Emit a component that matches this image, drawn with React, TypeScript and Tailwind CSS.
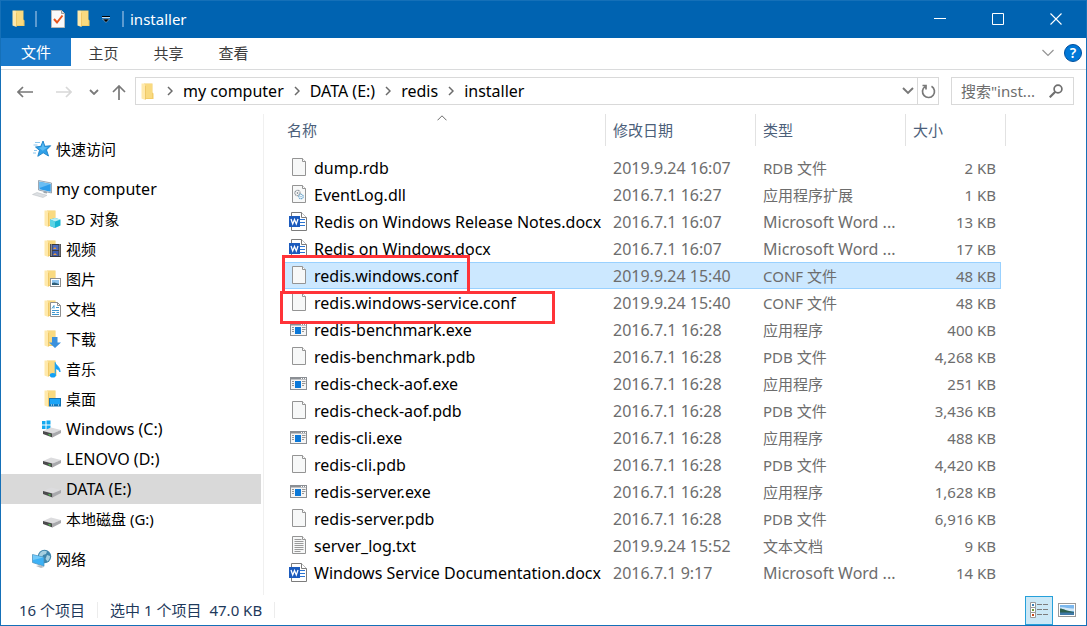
import type { ReactNode } from 'react';

type FileKind = 'blank' | 'dll' | 'word' | 'exe' | 'text';

interface FileRow {
  name: string;
  date: string;
  type: string;
  size: string;
  kind: FileKind;
  selected?: boolean;
  mark?: string;
}

const files: FileRow[] = [
  { name: 'dump.rdb', date: '2019.9.24 16:07', type: 'RDB 文件', size: '2 KB', kind: 'blank' },
  { name: 'EventLog.dll', date: '2016.7.1 16:27', type: '应用程序扩展', size: '1 KB', kind: 'dll' },
  { name: 'Redis on Windows Release Notes.docx', date: '2016.7.1 16:07', type: 'Microsoft Word ...', size: '13 KB', kind: 'word' },
  { name: 'Redis on Windows.docx', date: '2016.7.1 16:07', type: 'Microsoft Word ...', size: '17 KB', kind: 'word' },
  { name: 'redis.windows.conf', date: '2019.9.24 15:40', type: 'CONF 文件', size: '48 KB', kind: 'blank', selected: true, mark: '-left-0.5 -top-2 h-[39px] w-[188px]' },
  { name: 'redis.windows-service.conf', date: '2019.9.24 15:40', type: 'CONF 文件', size: '48 KB', kind: 'blank', mark: '-left-1 top-px h-[33px] w-[275px]' },
  { name: 'redis-benchmark.exe', date: '2016.7.1 16:28', type: '应用程序', size: '400 KB', kind: 'exe' },
  { name: 'redis-benchmark.pdb', date: '2016.7.1 16:28', type: 'PDB 文件', size: '4,268 KB', kind: 'blank' },
  { name: 'redis-check-aof.exe', date: '2016.7.1 16:28', type: '应用程序', size: '251 KB', kind: 'exe' },
  { name: 'redis-check-aof.pdb', date: '2016.7.1 16:28', type: 'PDB 文件', size: '3,436 KB', kind: 'blank' },
  { name: 'redis-cli.exe', date: '2016.7.1 16:28', type: '应用程序', size: '488 KB', kind: 'exe' },
  { name: 'redis-cli.pdb', date: '2016.7.1 16:28', type: 'PDB 文件', size: '4,420 KB', kind: 'blank' },
  { name: 'redis-server.exe', date: '2016.7.1 16:28', type: '应用程序', size: '1,628 KB', kind: 'exe' },
  { name: 'redis-server.pdb', date: '2016.7.1 16:28', type: 'PDB 文件', size: '6,916 KB', kind: 'blank' },
  { name: 'server_log.txt', date: '2019.9.24 15:52', type: '文本文档', size: '9 KB', kind: 'text' },
  { name: 'Windows Service Documentation.docx', date: '2016.7.1 9:17', type: 'Microsoft Word ...', size: '14 KB', kind: 'word' },
];

/** Latin-only labels are set one step larger than labels with Chinese text. */
function labelSize(text: string) {
  return /^[ -~]+$/.test(text) ? 'text-[16px] leading-5' : 'text-[15px] leading-5';
}

function FolderShape() {
  return (
    <>
      <path d="M3 0.5h8.5v9l1 1V16H3z" fill="#f3cd69" />
      <path d="M3.5 1h7.5v14H3.5z" fill="#f9da80" />
      <path d="M0.5 0.5h2.5l1.5 1.8V17L0.5 15.5z" fill="#ffe9ab" />
      <path d="M4.5 2.5V16.5" stroke="#e9bd55" strokeWidth="0.7" />
    </>
  );
}

function FolderIcon() {
  return (
    <svg width="13" height="17" viewBox="0 0 13 17" aria-hidden="true">
      <FolderShape />
    </svg>
  );
}

function PageShape() {
  return (
    <>
      <path d="M2.5 0.5h10l3 3v14h-13z" fill="#f7f8f8" stroke="#949494" />
      <path d="M12.5 0.5v3h3" fill="#fff" stroke="#949494" />
    </>
  );
}

function FileIcon({ kind }: { kind: FileKind }) {
  return (
    <svg width="18" height="20" viewBox="0 0 18 20" className="shrink-0" aria-hidden="true">
      {kind === 'word' && (
        <>
          <path d="M2.500 0.500h10l5 5v13h-15z" fill="#fff" stroke="#7c7c7c" />
          <path d="M12.500 0.500v5h5" fill="#fff" stroke="#7c7c7c" />
          <path d="M11 7.500h5M11 10.500h5M11 13.500h5" stroke="#2b74d2" />
          <rect x="0" y="4" width="11" height="11" fill="#1c5bbd" />
          <path d="M2 7l1.700 5 1.800-4.500 1.800 4.500 1.700-5" fill="none" stroke="#fff" strokeWidth="1.300" />
        </>
      )}
      {kind === 'exe' && (
        <>
          <rect x="1.500" y="3.500" width="16" height="12" fill="#f5f5f5" stroke="#8b8f94" />
          <path d="M1 4.500h17" stroke="#8b8f94" strokeWidth="2" />
          <path d="M12 4.500h1M14 4.500h1M16 4.500h1" stroke="#fff" />
          <rect x="6" y="7" width="6" height="7" fill="#0b78d8" />
          <path d="M3 7.500h2M3 9.500h2M3 11.500h2M13 7.500h3.500M13 9.500h3.500M13 11.500h2" stroke="#8a8a8a" strokeWidth="0.900" />
        </>
      )}
      {(kind === 'blank' || kind === 'dll' || kind === 'text') && (
        <g transform="translate(1 0)">
          <PageShape />
          {kind === 'text' && (
            <path d="M4.500 3.500h7M4.500 5.500h9M4.500 7.500h9M4.500 9.500h9M4.500 11.500h9M4.500 13.500h9M4.500 15.500h6" stroke="#9a9a9a" />
          )}
          {kind === 'dll' && (
            <>
              <circle cx="7.500" cy="8" r="2.600" fill="#fff" stroke="#8d949a" strokeWidth="1.300" strokeDasharray="1.300 0.500" />
              <circle cx="7.500" cy="8" r="0.900" fill="#8d949a" />
              <circle cx="11" cy="11.500" r="2.200" fill="#fff" stroke="#6fa8cf" strokeWidth="1.300" strokeDasharray="1.300 0.500" />
              <circle cx="11" cy="11.500" r="0.700" fill="#6fa8cf" />
            </>
          )}
        </g>
      )}
    </svg>
  );
}

type NavKind = 'star' | 'pc' | '3d' | 'video' | 'image' | 'doc' | 'download' | 'music' | 'desktop' | 'windrive' | 'drive' | 'network';

function DriveShape() {
  return (
    <>
      <path d="M1 12l8-3.500L19 11 10.500 14.500z" fill="#dcdcde" />
      <path d="M1 12l9.500 2.500V18.500L1 15z" fill="#4b4b4d" />
      <path d="M10.500 14.500L19 11v3L10.500 18.500z" fill="#a9a9ad" />
      <path d="M6.500 15.500l2 0.600" stroke="#4ed04e" strokeWidth="1.300" />
    </>
  );
}

const badges: Partial<Record<NavKind, ReactNode>> = {
  '3d': (
    <>
      <path d="M12 8l5.500 1.500v6L12 18 7 16V9.500z" fill="#19b5d2" />
      <path d="M7 9.500l5-1.500 5.500 1.500L12 11.500z" fill="#b8eef5" />
      <path d="M7 9.500l5 2V18l-5-2z" fill="#5bd3e4" />
    </>
  ),
  video: (
    <>
      <rect x="7" y="4" width="11" height="13" fill="#3b3b3d" />
      <rect x="9.500" y="5" width="6" height="5" fill="#4d6dc0" />
      <rect x="9.500" y="11" width="6" height="5" fill="#3c5cb0" />
      <path d="M10 9l2-2 1.500 2zM10 15l2-2 2 2z" fill="#e89a3c" />
      <path d="M8.300 4.500v12M16.800 4.500v12" stroke="#fff" strokeDasharray="1 1" />
    </>
  ),
  image: (
    <>
      <rect x="7.500" y="8.500" width="10" height="8" fill="#fff" stroke="#8f8f8f" />
      <rect x="9" y="10" width="7" height="5" fill="#8fc4ee" />
      <path d="M9 13l2.500-0.500L16 14v1H9z" fill="#2e5d77" />
    </>
  ),
  doc: (
    <>
      <path d="M7.500 2.500h7l3 3v11h-10z" fill="#fff" stroke="#8f8f8f" />
      <path d="M14.500 2.500v3h3" fill="none" stroke="#8f8f8f" />
      <path d="M9 8.500l2-3v3M13 7.500h3M9 10.500h7M9 12.500h3M13.500 12.500h2.500M9 14.500h7" fill="none" stroke="#3f97cf" />
    </>
  ),
  download: <path d="M9 7h5.500v5.500h3.500l-6 5.500-6-5.500h3z" fill="#3b91dd" />,
  music: (
    <>
      <ellipse cx="9.800" cy="15.300" rx="3" ry="2.300" fill="#12a0f5" />
      <path d="M12.200 15.500V2.500c0.500 3 5 4 4.800 9.500c-0.800-2-2-2.800-4-3.200" fill="#12a0f5" stroke="#12a0f5" strokeWidth="0.900" />
    </>
  ),
  desktop: (
    <>
      <rect x="6.500" y="8.500" width="11" height="7.500" fill="#1ba4f7" stroke="#1474b4" />
      <path d="M7 15h10" stroke="#0d5c93" />
      <path d="M8 15h1M10 15h1M15 15h1" stroke="#fff" />
    </>
  ),
};

function NavIcon({ kind }: { kind: NavKind }) {
  return (
    <svg width="20" height="20" viewBox="0 0 20 20" className="shrink-0" aria-hidden="true">
      {kind === 'star' && (
        <>
          <path d="M11 2l1.900 5.300 5.800-0.600-4.200 4.200 2 6.100-5.300-3.200-5.400 3.500 1.700-6L3.500 8l5.400-0.700z" fill="#2fa0e8" stroke="#1b80c6" strokeWidth="0.900" />
          <path d="M11 3.500l1.200 4.600 3.500 0.200-5 3.500-4-3 2.800-0.500z" fill="#5cbcf3" />
          <path d="M3 3.500h5M1.500 6h4M2 11.500h3M1 14h3" stroke="#8cc6ee" />
        </>
      )}
      {kind === 'pc' && (
        <>
          <path d="M6.500 1.500l13 2.500v10l-13-3z" fill="#dce4ea" stroke="#8796a3" strokeWidth="0.800" />
          <path d="M7.500 2.800l11.200 2.200v7.800l-11.200-2.600z" fill="#2d9cea" />
          <path d="M7.500 2.800l11.200 2.200-11.200 4z" fill="#69bdf3" />
          <path d="M11.500 12.300l3.500 0.800v1.400l-3.500-0.500z" fill="#9ba5ad" />
          <path d="M0.500 15.500l4.500-2 10 2.800-4 2.200z" fill="#dcdfe2" stroke="#b6bcc1" strokeWidth="0.500" />
        </>
      )}
      {kind === 'network' && (
        <>
          <circle cx="12.500" cy="7.500" r="6.700" fill="#3f86ac" />
          <path d="M9 3c2-1.500 4-1.500 6-0.500l-1 2.500-3 1-1 3-3 1C6.500 6 7.500 4.500 9 3zM15 6l3 1c0 3-1 4-2.500 5.500L13.500 10z" fill="#a5cfe0" />
          <path d="M0.500 5.500l11.500 2.800v9L0.500 13.500z" fill="#3db1f5" stroke="#4b8fb9" strokeWidth="0.700" />
          <path d="M1 6l10.500 2.500L1 11z" fill="#74caf9" />
          <path d="M4 17l4-1 4 2-3 1z" fill="#b5bdc3" />
        </>
      )}
      {kind === 'drive' && <DriveShape />}
      {kind === 'windrive' && (
        <>
          <path d="M0 2h3.500v3.500H0zM4.500 1.500H8.500v4H4.500zM0 6.500h3.500V10H0zM4.500 6.500h4v4h-4z" fill="#14aaf0" />
          <DriveShape />
        </>
      )}
      {badges[kind] && (
        <g transform="translate(1 1)">
          <g transform="translate(1 0)">
            <FolderShape />
          </g>
          {badges[kind]}
        </g>
      )}
    </svg>
  );
}

interface NavItem {
  label: string;
  kind: NavKind;
  current?: boolean;
}

const places: NavItem[] = [
  { label: '3D 对象', kind: '3d' },
  { label: '视频', kind: 'video' },
  { label: '图片', kind: 'image' },
  { label: '文档', kind: 'doc' },
  { label: '下载', kind: 'download' },
  { label: '音乐', kind: 'music' },
  { label: '桌面', kind: 'desktop' },
  { label: 'Windows (C:)', kind: 'windrive' },
  { label: 'LENOVO (D:)', kind: 'drive' },
  { label: 'DATA (E:)', kind: 'drive', current: true },
  { label: '本地磁盘 (G:)', kind: 'drive' },
];

function NavLink({ item, nested = false }: { item: NavItem; nested?: boolean }) {
  return (
    <a
      href="#"
      aria-current={item.current ? 'page' : undefined}
      className={`flex h-[30px] items-center gap-1 whitespace-nowrap text-black ${labelSize(item.label)} ${nested ? 'pl-[41px]' : 'pl-[31px]'} ${item.current ? 'bg-[#d9d9d9]' : ''}`}
    >
      <NavIcon kind={item.kind} />
      {item.label}
    </a>
  );
}

function Crumb({ label }: { label: string }) {
  return (
    <>
      <span className="flex w-[26px] justify-center">
        <svg width="6" height="10" viewBox="0 0 6 10" fill="none" stroke="#6b6b6b" strokeWidth="1.500" aria-hidden="true">
          <path d="M1 1l4 4-4 4" />
        </svg>
      </span>
      <button type="button" className={`whitespace-nowrap ${labelSize(label)}`}>{label}</button>
    </>
  );
}

function TitleBar() {
  return (
    <header className="flex h-[37px] items-center bg-[#0063b1] pb-0.5 text-white">
      <div className="flex items-center pl-[11px]">
        <FolderIcon />
        <span className="ml-2.5 h-4 w-0.5 border border-[#5d9bd0] bg-[#003f78]" />
        <button type="button" aria-label="属性" className="ml-3.5">
          <svg width="14" height="18" viewBox="0 0 14 18" aria-hidden="true">
            <path d="M0.500 0.500h10l3 3v14h-13z" fill="#fafafa" stroke="#b8b8b8" />
            <path d="M10.500 0.500v3h3" fill="#ddd" stroke="#9a9a9a" />
            <path d="M3 9l3 3.500 5.500-7" fill="none" stroke="#e8541c" strokeWidth="2" />
          </svg>
        </button>
        <button type="button" aria-label="新建文件夹" className="ml-3">
          <FolderIcon />
        </button>
        <button type="button" aria-label="自定义快速访问工具栏" className="ml-3">
          <svg width="8" height="8" viewBox="0 0 8 8" aria-hidden="true">
            <path d="M0 1.500h8" stroke="#000" />
            <path d="M0 2.500h8" stroke="#c3dcf0" />
            <path d="M0.500 4h7L4 7.500z" fill="#000" stroke="#c3dcf0" strokeWidth="0.500" />
          </svg>
        </button>
        <span className="ml-3 h-4 w-0.5 border border-[#5d9bd0] bg-[#003f78]" />
      </div>
      <h1 className="ml-1.5 text-[15px]">installer</h1>
      <div className="ml-auto flex h-full pr-px">
        <button type="button" aria-label="最小化" className="flex w-[58px] items-center justify-center">
          <svg width="12" height="12" viewBox="0 0 12 12" stroke="#fff" aria-hidden="true"><path d="M0 5.500h12" /></svg>
        </button>
        <button type="button" aria-label="最大化" className="flex w-[58px] items-center justify-center">
          <svg width="12" height="12" viewBox="0 0 12 12" stroke="#fff" fill="none" aria-hidden="true"><path d="M0.500 0.500h11v11h-11z" /></svg>
        </button>
        <button type="button" aria-label="关闭" className="flex w-[58px] items-center justify-center">
          <svg width="12" height="12" viewBox="0 0 12 12" stroke="#fff" strokeWidth="1.100" aria-hidden="true"><path d="M0.500 0.500l11 11M11.500 0.500l-11 11" /></svg>
        </button>
      </div>
    </header>
  );
}

function Ribbon() {
  return (
    <nav aria-label="功能区" className="flex h-8 items-start border-b border-[#dadbdc]">
      <button type="button" className="h-7 w-[70px] bg-[#1979ca] text-white">文件</button>
      {['主页', '共享', '查看'].map((tab) => (
        <button key={tab} type="button" className="h-[30px] w-[65px] text-[#3c3c3c]">{tab}</button>
      ))}
      <div className="ml-auto flex h-[30px] items-center gap-2.5 pr-1">
        <button type="button" aria-label="展开功能区">
          <svg width="12" height="8" viewBox="0 0 12 8" fill="none" stroke="#949494" strokeWidth="1.200" aria-hidden="true"><path d="M0.500 1L6 6.500 11.500 1" /></svg>
        </button>
        <button type="button" aria-label="帮助" className="flex h-[18px] w-[18px] items-center justify-center rounded-full border border-[#004f9e] bg-[#0078d7] text-[14px] font-semibold leading-4 text-white">?</button>
      </div>
    </nav>
  );
}

function Toolbar() {
  return (
    <div className="flex h-11 items-center pb-0.5 pr-3">
      <div className="flex w-[134px] items-center pl-4 pt-0.5">
        <button type="button" aria-label="后退">
          <svg width="16" height="12" viewBox="0 0 16 12" fill="none" stroke="#787878" strokeWidth="1.700" aria-hidden="true"><path d="M6 1L1 6l5 5M1 6h15" /></svg>
        </button>
        <button type="button" aria-label="前进" className="ml-[23px]">
          <svg width="16" height="12" viewBox="0 0 16 12" fill="none" stroke="#d8d8d8" strokeWidth="1.700" aria-hidden="true"><path d="M10 1l5 5-5 5M15 6H0" /></svg>
        </button>
        <button type="button" aria-label="最近浏览的位置" className="ml-[17px]">
          <svg width="10" height="6" viewBox="0 0 10 6" fill="none" stroke="#7a7a7a" strokeWidth="1.800" aria-hidden="true"><path d="M1 1l4 4 4-4" /></svg>
        </button>
        <button type="button" aria-label="向上" className="ml-[13px]">
          <svg width="14" height="15" viewBox="0 0 14 15" fill="none" stroke="#787878" strokeWidth="1.700" aria-hidden="true"><path d="M1 7l6-6 6 6M7 1v14" /></svg>
        </button>
      </div>
      <div className="flex h-7 flex-1 items-center border border-[#d9d9d9] pl-[5px] text-black">
        <span className="mr-[3px]"><FolderIcon /></span>
        <Crumb label="my computer" />
        <Crumb label="DATA (E:)" />
        <Crumb label="redis" />
        <Crumb label="installer" />
        <button type="button" aria-label="历史记录" className="ml-auto flex h-full w-[18px] items-center justify-center">
          <svg width="12" height="8" viewBox="0 0 12 8" fill="none" stroke="#787878" strokeWidth="1.900" aria-hidden="true"><path d="M1 1l5 5 5-5" /></svg>
        </button>
        <button type="button" aria-label="刷新" className="flex h-full w-[21px] items-center justify-center border-l border-[#d9d9d9]">
          <svg width="15" height="15" viewBox="0 0 15 15" fill="none" stroke="#787878" strokeWidth="1.700" aria-hidden="true">
            <path d="M10.500 2.300a6 6 0 1 1-6.500 0.300M1.500 1.500H5v4" />
          </svg>
        </button>
      </div>
      <div className="ml-3 flex h-7 w-[123px] items-center border border-[#d9d9d9] pl-[9px] pr-2.5">
        <input type="text" aria-label="搜索" placeholder='搜索"inst...' className="w-full min-w-0 flex-1 bg-transparent outline-none placeholder:text-[#6d6d6d]" />
        <svg width="14" height="14" viewBox="0 0 14 14" fill="none" stroke="#6f6f6f" strokeWidth="1.700" className="shrink-0" aria-hidden="true">
          <circle cx="9" cy="5" r="3.900" />
          <path d="M6.300 7.800L0.700 13.300" strokeWidth="2.200" />
        </svg>
      </div>
    </div>
  );
}

function FileTable() {
  const heading = 'flex h-8 w-full items-center border-r border-[#e2e2e2] pl-[7px] text-[#4c607a]';
  return (
    <table className="w-[723px] table-fixed border-separate border-spacing-0 text-[#6d6d6d]">
      <colgroup>
        <col className="w-[323px]" />
        <col className="w-[150px]" />
        <col className="w-[150px]" />
        <col className="w-[95px]" />
        <col className="w-[5px]" />
      </colgroup>
      <thead>
        <tr className="font-normal">
          <th className="relative p-0 pb-2 font-normal">
            <button type="button" className="flex h-8 w-full items-center border-r border-[#e2e2e2] pl-1 text-[#4c607a]">名称</button>
            <svg width="10" height="6" viewBox="0 0 10 6" fill="none" stroke="#6b6b6b" className="absolute left-[154px] top-px" aria-hidden="true"><path d="M0.500 5.300L5 0.800l4.500 4.500" /></svg>
          </th>
          <th className="p-0 pb-2 font-normal"><button type="button" className={heading}>修改日期</button></th>
          <th className="p-0 pb-2 font-normal"><button type="button" className={heading}>类型</button></th>
          <th colSpan={2} className="p-0 pb-2 font-normal"><button type="button" className={heading}>大小</button></th>
        </tr>
      </thead>
      <tbody>
        {files.map((file) => {
          const edge = file.selected ? 'border-[#99d1ff] bg-[#cce8ff]' : 'border-transparent';
          return (
            <tr key={file.name} className="h-[27px]" aria-selected={file.selected}>
              <td className={`relative border-y border-l p-0 ${edge}`}>
                <div className={`flex items-center gap-[7px] whitespace-nowrap pl-[5px] text-black ${labelSize(file.name)}`}>
                  <FileIcon kind={file.kind} />
                  {file.name}
                </div>
                {file.mark && <span className={`pointer-events-none absolute z-10 border-[3px] border-[#ff3338] ${file.mark}`} />}
              </td>
              <td className={`whitespace-nowrap border-y p-0 pl-[7px] ${labelSize(file.date)} ${edge}`}>{file.date}</td>
              <td className={`whitespace-nowrap border-y p-0 pl-[7px] ${labelSize(file.type)} ${edge}`}>{file.type}</td>
              <td className={`whitespace-nowrap border-y border-r p-0 pr-1 text-right ${edge}`}>{file.size}</td>
            </tr>
          );
        })}
      </tbody>
    </table>
  );
}

function StatusBar() {
  return (
    <footer className="flex h-[30px] items-center pl-[18px] text-[#1e395b]">
      <span>16 个项目</span>
      <span className="ml-3 h-4 w-px bg-[#ececec]" />
      <span className="ml-3">选中 1 个项目</span>
      <span className="ml-2">47.0 KB</span>
      <span className="ml-3 h-4 w-px bg-[#ececec]" />
      <div className="ml-auto flex h-full items-center pr-2.5">
        <button type="button" aria-label="详细信息" aria-pressed="true" className="mr-[5px] flex h-[29px] w-7 items-center justify-center self-end border border-[#26a0da] bg-[#cce8f6]">
          <svg width="18" height="17" viewBox="0 0 18 17" aria-hidden="true">
            <path d="M0.500 0.500h5v5h-5zM0.500 5.500h5v5h-5zM0.500 10.500h5v5h-5z" fill="#fff" stroke="#999" />
            <path d="M2 3h2" stroke="#3c7fb5" strokeWidth="2" />
            <path d="M2 8h2" stroke="#6f9a35" strokeWidth="2" />
            <path d="M2 13h2" stroke="#c84818" strokeWidth="2" />
            <path d="M7 2.500h5M13 2.500h5M7 7.500h5M13 7.500h5M7 12.500h5M13 12.500h5" stroke="#7d7d7d" />
          </svg>
        </button>
        <button type="button" aria-label="大图标">
          <svg width="18" height="14" viewBox="0 0 18 14" aria-hidden="true">
            <rect x="0.500" y="0.500" width="17" height="13" fill="#fff" stroke="#999" />
            <rect x="2" y="2" width="14" height="10" fill="#7cb8ee" />
            <path d="M2 4.500c4-1 9 1.500 14 1V8H2z" fill="#d4e9f8" />
            <path d="M2 5.500c3 0 7 2.500 14 3.500v1H2z" fill="#2d5f4d" />
            <path d="M2 9.500h14V12H2z" fill="#3f79a8" />
          </svg>
        </button>
      </div>
    </footer>
  );
}

export default function App() {
  return (
    <div className="flex min-h-screen flex-col border border-[#1570b8] bg-white font-['Noto_Sans','Noto_Sans_CJK_SC',sans-serif] text-[15px] leading-5">
      <TitleBar />
      <Ribbon />
      <Toolbar />
      <div className="flex flex-1">
        <aside className="w-[263px] shrink-0 border-r border-[#f0f0f0] pr-0.5 pt-5">
          <nav aria-label="导航窗格" className="flex flex-col gap-2.5">
            <NavLink item={{ label: '快速访问', kind: 'star' }} />
            <div>
              <NavLink item={{ label: 'my computer', kind: 'pc' }} />
              {places.map((item) => (
                <NavLink key={item.label} item={item} nested />
              ))}
            </div>
            <NavLink item={{ label: '网络', kind: 'network' }} />
          </nav>
        </aside>
        <main className="min-w-0 flex-1 pl-[19px]">
          <FileTable />
        </main>
      </div>
      <StatusBar />
    </div>
  );
}
